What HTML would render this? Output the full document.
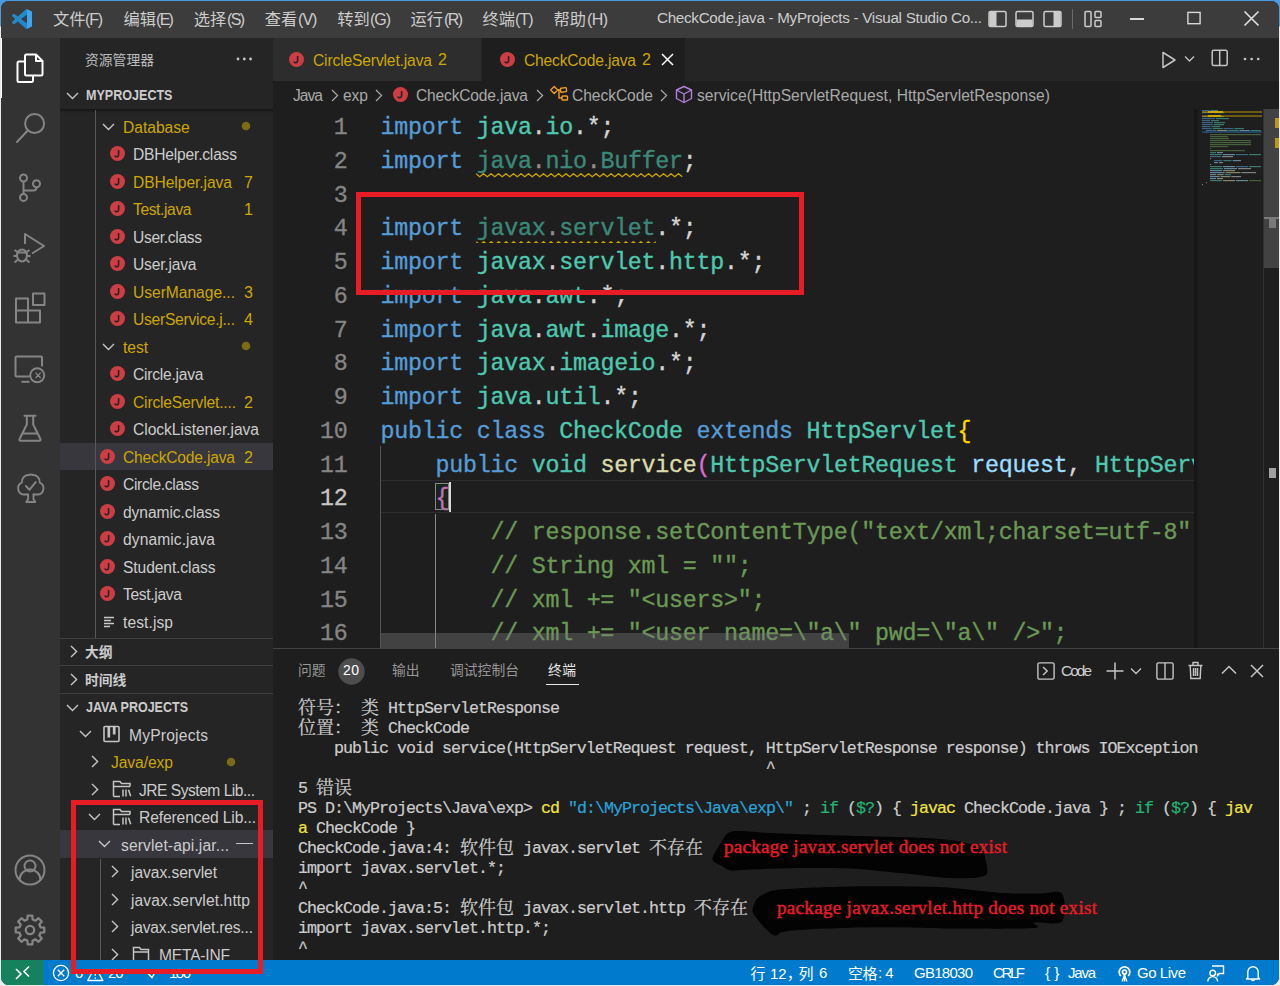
<!DOCTYPE html>
<html><head><meta charset="utf-8"><title>VS Code</title>
<style>
html,body{margin:0;padding:0;width:1280px;height:986px;overflow:hidden;background:#e9e4e4;}
body{background:linear-gradient(#4a9be0 0,#4a9be0 26px,#efeaea 27px,#efeaea 100%);font-family:"Liberation Sans",sans-serif;}
#win{position:absolute;left:1px;top:1px;width:1278px;height:984px;border-radius:8px;overflow:hidden;background:#1e1e1e;}
#win>*{margin-left:-1px;margin-top:-1px}
.b{position:absolute;display:block}
.t{position:absolute;white-space:pre;}
.clip{position:absolute;overflow:hidden}
.clip>*{position:absolute}
.tx{overflow:visible}
.ln{position:absolute;-webkit-text-stroke:0.3px currentColor;left:0;width:74.5px;text-align:right;font-family:"Liberation Mono",monospace;font-size:23.3295px;line-height:33.75px;height:33.75px;letter-spacing:-0.255px}
.cl{position:absolute;left:107.6px;-webkit-text-stroke:0.35px currentColor;font-family:"Liberation Mono",monospace;font-size:23.3295px;letter-spacing:-0.255px;line-height:33.75px;height:33.75px;white-space:pre}
.tm{font-family:"Liberation Mono",monospace;font-size:16.664px;letter-spacing:-1px;height:20px;line-height:20px;-webkit-text-stroke:0.2px currentColor}
.ts{font-family:"Liberation Serif","Noto Serif CJK SC",serif;font-size:18px;color:#cccccc;-webkit-text-stroke:0.2px currentColor}

</style></head>
<body>
<div id="win">
<div class="b" style="left:0px;top:0px;width:1280px;height:38px;background:#3c3c3c;"></div>
<svg class="b" style="left:12px;top:9px;" width="20" height="20" viewBox="0 0 100 100"><path d="M70.9 99.3a6.2 6.2 0 0 0 4.96-.19l20.6-9.9A6.25 6.25 0 0 0 100 83.6V16.4a6.25 6.25 0 0 0-3.54-5.63L75.87.86a6.23 6.23 0 0 0-7.1 1.2L29.35 38.04 12.19 25.01a4.16 4.16 0 0 0-5.32.24l-5.5 5.01a4.17 4.17 0 0 0 0 6.16L16.24 50 1.36 63.58a4.17 4.17 0 0 0 0 6.16l5.51 5.01a4.16 4.16 0 0 0 5.32.24l17.17-13.03L68.77 97.9a6.2 6.2 0 0 0 2.14 1.4zM75.02 27.3 45.11 50l29.9 22.7V27.3z" fill="#2489ca" fill-rule="evenodd"/><path d="M75.02 27.3v45.4l.0 26.5 21.4-10.3A6.25 6.25 0 0 0 100 83.6V16.4a6.25 6.25 0 0 0-3.54-5.63L75.87.86 75.02 27.3z" fill="#3fa9f5" opacity=".9"/></svg>
<div class="t" style="left:53.05px;top:7.60px;height:23px;line-height:23px;font-family:'Liberation Sans','Noto Sans CJK SC', sans-serif;font-size:16.25px;font-weight:400;color:#cccccc;">文件</div>
<svg class="b tx" style="left:85.45px;top:9.14px;" width="22.2" height="22.4"><text x="0" y="16" font-family="'Liberation Sans', sans-serif" font-size="16" font-weight="400" fill="#cccccc" textLength="18.15" lengthAdjust="spacing" xml:space="preserve">(F)</text></svg>
<div class="t" style="left:123.55px;top:7.60px;height:23px;line-height:23px;font-family:'Liberation Sans','Noto Sans CJK SC', sans-serif;font-size:16.25px;font-weight:400;color:#cccccc;">编辑</div>
<svg class="b tx" style="left:156.2px;top:9.14px;" width="21.9" height="22.4"><text x="0" y="16" font-family="'Liberation Sans', sans-serif" font-size="16" font-weight="400" fill="#cccccc" textLength="17.95" lengthAdjust="spacing" xml:space="preserve">(E)</text></svg>
<div class="t" style="left:193.8px;top:7.60px;height:23px;line-height:23px;font-family:'Liberation Sans','Noto Sans CJK SC', sans-serif;font-size:16.25px;font-weight:400;color:#cccccc;">选择</div>
<svg class="b tx" style="left:226.7px;top:9.14px;" width="22.2" height="22.4"><text x="0" y="16" font-family="'Liberation Sans', sans-serif" font-size="16" font-weight="400" fill="#cccccc" textLength="18.20" lengthAdjust="spacing" xml:space="preserve">(S)</text></svg>
<div class="t" style="left:264.8px;top:7.60px;height:23px;line-height:23px;font-family:'Liberation Sans','Noto Sans CJK SC', sans-serif;font-size:16.25px;font-weight:400;color:#cccccc;">查看</div>
<svg class="b tx" style="left:297.95px;top:9.14px;" width="23.4" height="22.4"><text x="0" y="16" font-family="'Liberation Sans', sans-serif" font-size="16" font-weight="400" fill="#cccccc" textLength="19.45" lengthAdjust="spacing" xml:space="preserve">(V)</text></svg>
<div class="t" style="left:337.3px;top:7.60px;height:23px;line-height:23px;font-family:'Liberation Sans','Noto Sans CJK SC', sans-serif;font-size:16.25px;font-weight:400;color:#cccccc;">转到</div>
<svg class="b tx" style="left:370.45px;top:9.14px;" width="25.2" height="22.4"><text x="0" y="16" font-family="'Liberation Sans', sans-serif" font-size="16" font-weight="400" fill="#cccccc" textLength="21.20" lengthAdjust="spacing" xml:space="preserve">(G)</text></svg>
<div class="t" style="left:410.55px;top:7.60px;height:23px;line-height:23px;font-family:'Liberation Sans','Noto Sans CJK SC', sans-serif;font-size:16.25px;font-weight:400;color:#cccccc;">运行</div>
<svg class="b tx" style="left:443.7px;top:9.14px;" width="23.2" height="22.4"><text x="0" y="16" font-family="'Liberation Sans', sans-serif" font-size="16" font-weight="400" fill="#cccccc" textLength="19.20" lengthAdjust="spacing" xml:space="preserve">(R)</text></svg>
<div class="t" style="left:482.55px;top:7.60px;height:23px;line-height:23px;font-family:'Liberation Sans','Noto Sans CJK SC', sans-serif;font-size:16.25px;font-weight:400;color:#cccccc;">终端</div>
<svg class="b tx" style="left:515.45px;top:9.14px;" width="22.7" height="22.4"><text x="0" y="16" font-family="'Liberation Sans', sans-serif" font-size="16" font-weight="400" fill="#cccccc" textLength="18.70" lengthAdjust="spacing" xml:space="preserve">(T)</text></svg>
<div class="t" style="left:553.55px;top:7.60px;height:23px;line-height:23px;font-family:'Liberation Sans','Noto Sans CJK SC', sans-serif;font-size:16.25px;font-weight:400;color:#cccccc;">帮助</div>
<svg class="b tx" style="left:586.7px;top:9.14px;" width="25.2" height="22.4"><text x="0" y="16" font-family="'Liberation Sans', sans-serif" font-size="16" font-weight="400" fill="#cccccc" textLength="21.20" lengthAdjust="spacing" xml:space="preserve">(H)</text></svg>
<svg class="b tx" style="left:657px;top:7.77px;" width="329.0" height="21.3"><text x="0" y="15.2" font-family="'Liberation Sans', sans-serif" font-size="15.2" font-weight="400" fill="#cccccc" textLength="325.00" lengthAdjust="spacing" xml:space="preserve">CheckCode.java - MyProjects - Visual Studio Co...</text></svg>
<svg class="b" style="left:988px;top:10px;" width="19" height="18" viewBox="0 0 19 18"><rect x="1" y="1.5" width="17" height="15" rx="1.5" fill="none" stroke="#cccccc" stroke-width="1.5"/><rect x="1.5" y="2" width="7" height="14" fill="#cccccc"/></svg>
<svg class="b" style="left:1015px;top:10px;" width="19" height="18" viewBox="0 0 19 18"><rect x="1" y="1.5" width="17" height="15" rx="1.5" fill="none" stroke="#cccccc" stroke-width="1.5"/><rect x="1.5" y="9.5" width="16" height="6.5" fill="#cccccc"/></svg>
<svg class="b" style="left:1043px;top:10px;" width="19" height="18" viewBox="0 0 19 18"><rect x="1" y="1.5" width="17" height="15" rx="1.5" fill="none" stroke="#cccccc" stroke-width="1.5"/><rect x="10.5" y="2" width="7" height="14" fill="#cccccc"/></svg>
<div class="b" style="left:1072px;top:9px;width:1px;height:20px;background:#6b6b6b;"></div>
<svg class="b" style="left:1084px;top:10px;" width="18" height="18" viewBox="0 0 18 18"><g fill="none" stroke="#cccccc" stroke-width="1.5"><rect x="1" y="1.5" width="6" height="15" rx="1"/><rect x="11" y="1.5" width="6" height="6" rx="1"/><rect x="11" y="10.5" width="6" height="6" rx="1"/></g></svg>
<div class="b" style="left:1130px;top:18px;width:14px;height:1.5px;background:#d8d8d8;"></div>
<svg class="b" style="left:1186px;top:11px;" width="16" height="15" viewBox="0 0 16 15"><rect x="1.9" y="1.4" width="12.2" height="11.3" fill="none" stroke="#d8d8d8" stroke-width="1.4"/></svg>
<svg class="b" style="left:1243px;top:10px;" width="17" height="17" viewBox="0 0 17 17"><path d="M1.5 1.5 L15.5 15.5 M15.5 1.5 L1.5 15.5" stroke="#e0e0e0" stroke-width="1.6" fill="none"/></svg>
<div class="b" style="left:0px;top:38px;width:60px;height:922px;background:#333333;"></div>
<div class="b" style="left:1px;top:38px;width:1.4px;height:60px;background:#ffffff;"></div>
<svg class="b" style="left:15px;top:52px;" width="30" height="32" viewBox="0 0 30 32"><g fill="none" stroke="#fff" stroke-width="2" stroke-linejoin="round"><path d="M11.5 2.5 h9.5 l6.5 6.5 v13 a1.5 1.5 0 0 1 -1.5 1.5 h-14.5 a1.5 1.5 0 0 1 -1.5 -1.5 v-18 a1.5 1.5 0 0 1 1.5 -1.5z"/><path d="M21 2.5 v6.5 h6.5"/><path d="M10 9.5 h-6 a1.5 1.5 0 0 0 -1.5 1.5 v17.5 a1.5 1.5 0 0 0 1.5 1.5 h12.5 a1.5 1.5 0 0 0 1.5 -1.5 v-5"/></g></svg>
<svg class="b" style="left:14px;top:111px;" width="34" height="34" viewBox="0 0 34 34"><g fill="none" stroke="#858585" stroke-width="2" stroke-linecap="round"><circle cx="20.6" cy="12.5" r="9.5"/><path d="M13.7 19.5 L3 31"/></g></svg>
<svg class="b" style="left:14px;top:170px;" width="34" height="36" viewBox="0 0 34 36"><g fill="none" stroke="#858585" stroke-width="2"><circle cx="9.5" cy="8" r="3.5"/><circle cx="22.5" cy="13.7" r="3.5"/><circle cx="9.5" cy="27.4" r="3.5"/><path d="M9.5 11.5 V24 M22.5 17.2 V17.6 a3 3 0 0 1 -3 3 H9.5"/></g></svg>
<svg class="b" style="left:12px;top:230px;" width="36" height="36" viewBox="0 0 36 36"><g fill="none" stroke="#858585" stroke-width="2" stroke-linejoin="round"><path d="M13 14 V4 L32 16 L20 23.5"/><ellipse cx="10" cy="25.5" rx="5" ry="6"/><path d="M5.5 22 L2.5 20 M14.5 22 L17.5 20 M5 26 H1.5 M15 26 H18.5 M5.5 30 L2.5 32.5 M14.5 30 L17.5 32.5 M6 22.5 H14"/></g></svg>
<svg class="b" style="left:14px;top:290px;" width="34" height="34" viewBox="0 0 34 34"><g fill="none" stroke="#858585" stroke-width="2" stroke-linejoin="round"><path d="M2 8.5 H14 V20.5 H2 Z M14 20.5 H26 V32.5 H14 Z M2 20.5 V32.5 H14"/><rect x="19" y="3.5" width="11.5" height="11.5"/></g></svg>
<svg class="b" style="left:13px;top:353.4px;" width="36" height="34" viewBox="0 0 36 34"><g fill="none" stroke="#858585" stroke-width="2" stroke-linejoin="round"><path d="M16.5 23.5 H3.5 a1 1 0 0 1 -1 -1 V4.5 a1 1 0 0 1 1 -1 H28 a1 1 0 0 1 1 1 V13.5"/><path d="M8.5 28.8 H16.5"/><circle cx="24.2" cy="22.3" r="7"/><path d="M22.6 19.6 l2.3 2.7 l-2.3 2.7 M27.6 19.6 l-2.3 2.7 l2.3 2.7" stroke-width="1.3"/></g></svg>
<svg class="b" style="left:14px;top:411px;" width="34" height="34" viewBox="0 0 34 34"><g fill="none" stroke="#858585" stroke-width="2" stroke-linejoin="round" stroke-linecap="round"><path d="M10.5 4.8 H21.5 M12.8 4.8 V13.5 L5.6 28 a1.2 1.2 0 0 0 1 1.8 H25.4 a1.2 1.2 0 0 0 1 -1.8 L19.2 13.5 V4.8"/><path d="M9 22.4 H23"/></g></svg>
<svg class="b" style="left:13px;top:467.8px;" width="36" height="36" viewBox="0 0 36 36"><g transform="translate(1.6,1.8) scale(.9,.95)" fill="none" stroke="#858585" stroke-width="2.1" stroke-linejoin="round" stroke-linecap="round"><path d="M15 26 H10 a6.5 6.5 0 0 1 -2 -12.5 a7.5 7.5 0 0 1 7 -8 a8 8 0 0 1 6 0 a7.5 7.5 0 0 1 7 8 a6.5 6.5 0 0 1 -2 12.5 H21"/><path d="M15 26 V31 L13 34 H23 L21 31 V26"/><path d="M12.5 17 l4 4 l7 -8"/></g></svg>
<svg class="b" style="left:13.2px;top:852.8px;" width="34" height="34" viewBox="0 0 34 34"><g fill="none" stroke="#858585" stroke-width="2"><circle cx="17" cy="17" r="14.5"/><circle cx="17" cy="13" r="5.5"/><path d="M6.5 27 a10.5 10.5 0 0 1 21 0"/></g></svg>
<svg class="b" style="left:13px;top:912.8px;" width="34" height="34" viewBox="0 0 34 34"><g fill="none" stroke="#858585" stroke-width="2.3" stroke-linejoin="round"><path d="M31.3 14.7 L31.3 19.3 L27.5 19.7 L26.3 22.5 L28.8 25.5 L25.5 28.8 L22.5 26.3 L19.7 27.5 L19.3 31.3 L14.7 31.3 L14.3 27.5 L11.5 26.3 L8.5 28.8 L5.2 25.5 L7.7 22.5 L6.5 19.7 L2.7 19.3 L2.7 14.7 L6.5 14.3 L7.7 11.5 L5.2 8.5 L8.5 5.2 L11.5 7.7 L14.3 6.5 L14.7 2.7 L19.3 2.7 L19.7 6.5 L22.5 7.7 L25.5 5.2 L28.8 8.5 L26.3 11.5 L27.5 14.3Z"/><circle cx="17" cy="17" r="4.2"/></g></svg>
<div class="b" style="left:60px;top:38px;width:213px;height:922px;background:#252526;"></div>
<div class="t" style="left:85px;top:50.50px;height:19px;line-height:19px;font-family:'Liberation Sans','Noto Sans CJK SC', sans-serif;font-size:13.8px;font-weight:400;color:#bbbbbb;">资源管理器</div>
<svg class="b" style="left:236px;top:57px;" width="17" height="4" viewBox="0 0 17 4"><circle cx="2" cy="2" r="1.4" fill="#c5c5c5"/><circle cx="8.3" cy="2" r="1.4" fill="#c5c5c5"/><circle cx="14.6" cy="2" r="1.4" fill="#c5c5c5"/></svg>
<svg class="b" style="left:66.0px;top:89.0px;" width="13" height="13" viewBox="0 0 13 13"><path d="M1 4 L6.5 9.6 L12 4" fill="none" stroke="#c5c5c5" stroke-width="1.4"/></svg>
<svg class="b tx" style="left:85.5px;top:85.89px;" width="90.5" height="20.2"><text x="0" y="14.4" font-family="'Liberation Sans', sans-serif" font-size="14.4" font-weight="700" fill="#cccccc" textLength="86.50" lengthAdjust="spacingAndGlyphs" xml:space="preserve">MYPROJECTS</text></svg>
<div class="b" style="left:60px;top:108.6px;width:213px;height:4px;background:linear-gradient(rgba(0,0,0,.45),rgba(0,0,0,0));"></div>
<div class="b" style="left:60px;top:443px;width:213px;height:27.3px;background:#37373d;"></div>
<div class="b" style="left:95px;top:109.5px;width:1px;height:529px;background:#585858;"></div>
<svg class="b" style="left:102.0px;top:119.9px;" width="13" height="13" viewBox="0 0 13 13"><path d="M1 4 L6.5 9.6 L12 4" fill="none" stroke="#c5c5c5" stroke-width="1.4"/></svg>
<svg class="b tx" style="left:123px;top:116.91px;" width="70.8" height="21.8"><text x="0" y="15.6" font-family="'Liberation Sans', sans-serif" font-size="15.6" font-weight="400" fill="#cca700" textLength="66.77" lengthAdjust="spacing" xml:space="preserve">Database</text></svg>
<svg class="b" style="left:241px;top:121.3px;" width="10" height="10" viewBox="0 0 10 10"><circle cx="5" cy="5" r="4.3" fill="#7d6a17"/></svg>
<svg class="b" style="left:110.0px;top:146.2px;" width="15" height="15" viewBox="0 0 15 15"><circle cx="7.5" cy="7.5" r="7.5" fill="#cc3e44"/><path d="M8.6 4.1 V8.9 a1.9 1.9 0 0 1 -3.7 .5" fill="none" stroke="#2a2223" stroke-width="1.6"/></svg>
<svg class="b tx" style="left:133px;top:144.41px;" width="108.0" height="21.8"><text x="0" y="15.6" font-family="'Liberation Sans', sans-serif" font-size="15.6" font-weight="400" fill="#cccccc" textLength="104.00" lengthAdjust="spacing" xml:space="preserve">DBHelper.class</text></svg>
<svg class="b" style="left:110.0px;top:173.7px;" width="15" height="15" viewBox="0 0 15 15"><circle cx="7.5" cy="7.5" r="7.5" fill="#cc3e44"/><path d="M8.6 4.1 V8.9 a1.9 1.9 0 0 1 -3.7 .5" fill="none" stroke="#2a2223" stroke-width="1.6"/></svg>
<svg class="b tx" style="left:133px;top:171.91px;" width="103.0" height="21.8"><text x="0" y="15.6" font-family="'Liberation Sans', sans-serif" font-size="15.6" font-weight="400" fill="#cca700" textLength="99.00" lengthAdjust="spacing" xml:space="preserve">DBHelper.java</text></svg>
<svg class="b tx" style="left:244.3px;top:171.64px;" width="12.9" height="22.4"><text x="0" y="16" font-family="'Liberation Sans', sans-serif" font-size="16" font-weight="400" fill="#cca700" xml:space="preserve">7</text></svg>
<svg class="b" style="left:110.0px;top:201.2px;" width="15" height="15" viewBox="0 0 15 15"><circle cx="7.5" cy="7.5" r="7.5" fill="#cc3e44"/><path d="M8.6 4.1 V8.9 a1.9 1.9 0 0 1 -3.7 .5" fill="none" stroke="#2a2223" stroke-width="1.6"/></svg>
<svg class="b tx" style="left:133px;top:199.41px;" width="62.5" height="21.8"><text x="0" y="15.6" font-family="'Liberation Sans', sans-serif" font-size="15.6" font-weight="400" fill="#cca700" textLength="58.50" lengthAdjust="spacing" xml:space="preserve">Test.java</text></svg>
<svg class="b tx" style="left:244.3px;top:199.14px;" width="12.9" height="22.4"><text x="0" y="16" font-family="'Liberation Sans', sans-serif" font-size="16" font-weight="400" fill="#cca700" xml:space="preserve">1</text></svg>
<svg class="b" style="left:110.0px;top:228.7px;" width="15" height="15" viewBox="0 0 15 15"><circle cx="7.5" cy="7.5" r="7.5" fill="#cc3e44"/><path d="M8.6 4.1 V8.9 a1.9 1.9 0 0 1 -3.7 .5" fill="none" stroke="#2a2223" stroke-width="1.6"/></svg>
<svg class="b tx" style="left:133px;top:226.91px;" width="73.0" height="21.8"><text x="0" y="15.6" font-family="'Liberation Sans', sans-serif" font-size="15.6" font-weight="400" fill="#cccccc" textLength="69.00" lengthAdjust="spacing" xml:space="preserve">User.class</text></svg>
<svg class="b" style="left:110.0px;top:256.2px;" width="15" height="15" viewBox="0 0 15 15"><circle cx="7.5" cy="7.5" r="7.5" fill="#cc3e44"/><path d="M8.6 4.1 V8.9 a1.9 1.9 0 0 1 -3.7 .5" fill="none" stroke="#2a2223" stroke-width="1.6"/></svg>
<svg class="b tx" style="left:133px;top:254.41px;" width="67.5" height="21.8"><text x="0" y="15.6" font-family="'Liberation Sans', sans-serif" font-size="15.6" font-weight="400" fill="#cccccc" textLength="63.50" lengthAdjust="spacing" xml:space="preserve">User.java</text></svg>
<svg class="b" style="left:110.0px;top:283.7px;" width="15" height="15" viewBox="0 0 15 15"><circle cx="7.5" cy="7.5" r="7.5" fill="#cc3e44"/><path d="M8.6 4.1 V8.9 a1.9 1.9 0 0 1 -3.7 .5" fill="none" stroke="#2a2223" stroke-width="1.6"/></svg>
<svg class="b tx" style="left:133px;top:281.91px;" width="106.0" height="21.8"><text x="0" y="15.6" font-family="'Liberation Sans', sans-serif" font-size="15.6" font-weight="400" fill="#cca700" textLength="102.00" lengthAdjust="spacing" xml:space="preserve">UserManage...</text></svg>
<svg class="b tx" style="left:244.3px;top:281.64px;" width="12.9" height="22.4"><text x="0" y="16" font-family="'Liberation Sans', sans-serif" font-size="16" font-weight="400" fill="#cca700" xml:space="preserve">3</text></svg>
<svg class="b" style="left:110.0px;top:311.2px;" width="15" height="15" viewBox="0 0 15 15"><circle cx="7.5" cy="7.5" r="7.5" fill="#cc3e44"/><path d="M8.6 4.1 V8.9 a1.9 1.9 0 0 1 -3.7 .5" fill="none" stroke="#2a2223" stroke-width="1.6"/></svg>
<svg class="b tx" style="left:133px;top:309.41px;" width="106.0" height="21.8"><text x="0" y="15.6" font-family="'Liberation Sans', sans-serif" font-size="15.6" font-weight="400" fill="#cca700" textLength="102.00" lengthAdjust="spacing" xml:space="preserve">UserService.j...</text></svg>
<svg class="b tx" style="left:244.3px;top:309.14px;" width="12.9" height="22.4"><text x="0" y="16" font-family="'Liberation Sans', sans-serif" font-size="16" font-weight="400" fill="#cca700" xml:space="preserve">4</text></svg>
<svg class="b" style="left:102.0px;top:339.9px;" width="13" height="13" viewBox="0 0 13 13"><path d="M1 4 L6.5 9.6 L12 4" fill="none" stroke="#c5c5c5" stroke-width="1.4"/></svg>
<svg class="b tx" style="left:123px;top:336.91px;" width="29.1" height="21.8"><text x="0" y="15.6" font-family="'Liberation Sans', sans-serif" font-size="15.6" font-weight="400" fill="#cca700" textLength="25.14" lengthAdjust="spacing" xml:space="preserve">test</text></svg>
<svg class="b" style="left:241px;top:341.3px;" width="10" height="10" viewBox="0 0 10 10"><circle cx="5" cy="5" r="4.3" fill="#7d6a17"/></svg>
<svg class="b" style="left:110.0px;top:366.2px;" width="15" height="15" viewBox="0 0 15 15"><circle cx="7.5" cy="7.5" r="7.5" fill="#cc3e44"/><path d="M8.6 4.1 V8.9 a1.9 1.9 0 0 1 -3.7 .5" fill="none" stroke="#2a2223" stroke-width="1.6"/></svg>
<svg class="b tx" style="left:133px;top:364.41px;" width="74.5" height="21.8"><text x="0" y="15.6" font-family="'Liberation Sans', sans-serif" font-size="15.6" font-weight="400" fill="#cccccc" textLength="70.50" lengthAdjust="spacing" xml:space="preserve">Circle.java</text></svg>
<svg class="b" style="left:110.0px;top:393.7px;" width="15" height="15" viewBox="0 0 15 15"><circle cx="7.5" cy="7.5" r="7.5" fill="#cc3e44"/><path d="M8.6 4.1 V8.9 a1.9 1.9 0 0 1 -3.7 .5" fill="none" stroke="#2a2223" stroke-width="1.6"/></svg>
<svg class="b tx" style="left:133px;top:391.91px;" width="107.0" height="21.8"><text x="0" y="15.6" font-family="'Liberation Sans', sans-serif" font-size="15.6" font-weight="400" fill="#cca700" textLength="103.00" lengthAdjust="spacing" xml:space="preserve">CircleServlet....</text></svg>
<svg class="b tx" style="left:244.3px;top:391.64px;" width="12.9" height="22.4"><text x="0" y="16" font-family="'Liberation Sans', sans-serif" font-size="16" font-weight="400" fill="#cca700" xml:space="preserve">2</text></svg>
<svg class="b" style="left:110.0px;top:421.2px;" width="15" height="15" viewBox="0 0 15 15"><circle cx="7.5" cy="7.5" r="7.5" fill="#cc3e44"/><path d="M8.6 4.1 V8.9 a1.9 1.9 0 0 1 -3.7 .5" fill="none" stroke="#2a2223" stroke-width="1.6"/></svg>
<svg class="b tx" style="left:133px;top:419.41px;" width="130.0" height="21.8"><text x="0" y="15.6" font-family="'Liberation Sans', sans-serif" font-size="15.6" font-weight="400" fill="#cccccc" textLength="126.00" lengthAdjust="spacing" xml:space="preserve">ClockListener.java</text></svg>
<svg class="b" style="left:100.0px;top:448.7px;" width="15" height="15" viewBox="0 0 15 15"><circle cx="7.5" cy="7.5" r="7.5" fill="#cc3e44"/><path d="M8.6 4.1 V8.9 a1.9 1.9 0 0 1 -3.7 .5" fill="none" stroke="#2a2223" stroke-width="1.6"/></svg>
<svg class="b tx" style="left:123px;top:446.91px;" width="116.0" height="21.8"><text x="0" y="15.6" font-family="'Liberation Sans', sans-serif" font-size="15.6" font-weight="400" fill="#cca700" textLength="112.00" lengthAdjust="spacing" xml:space="preserve">CheckCode.java</text></svg>
<svg class="b tx" style="left:244.3px;top:446.64px;" width="12.9" height="22.4"><text x="0" y="16" font-family="'Liberation Sans', sans-serif" font-size="16" font-weight="400" fill="#cca700" xml:space="preserve">2</text></svg>
<svg class="b" style="left:100.0px;top:476.2px;" width="15" height="15" viewBox="0 0 15 15"><circle cx="7.5" cy="7.5" r="7.5" fill="#cc3e44"/><path d="M8.6 4.1 V8.9 a1.9 1.9 0 0 1 -3.7 .5" fill="none" stroke="#2a2223" stroke-width="1.6"/></svg>
<svg class="b tx" style="left:123px;top:474.41px;" width="80.0" height="21.8"><text x="0" y="15.6" font-family="'Liberation Sans', sans-serif" font-size="15.6" font-weight="400" fill="#cccccc" textLength="76.00" lengthAdjust="spacing" xml:space="preserve">Circle.class</text></svg>
<svg class="b" style="left:100.0px;top:503.7px;" width="15" height="15" viewBox="0 0 15 15"><circle cx="7.5" cy="7.5" r="7.5" fill="#cc3e44"/><path d="M8.6 4.1 V8.9 a1.9 1.9 0 0 1 -3.7 .5" fill="none" stroke="#2a2223" stroke-width="1.6"/></svg>
<svg class="b tx" style="left:123px;top:501.91px;" width="101.0" height="21.8"><text x="0" y="15.6" font-family="'Liberation Sans', sans-serif" font-size="15.6" font-weight="400" fill="#cccccc" textLength="97.00" lengthAdjust="spacing" xml:space="preserve">dynamic.class</text></svg>
<svg class="b" style="left:100.0px;top:531.2px;" width="15" height="15" viewBox="0 0 15 15"><circle cx="7.5" cy="7.5" r="7.5" fill="#cc3e44"/><path d="M8.6 4.1 V8.9 a1.9 1.9 0 0 1 -3.7 .5" fill="none" stroke="#2a2223" stroke-width="1.6"/></svg>
<svg class="b tx" style="left:123px;top:529.41px;" width="96.0" height="21.8"><text x="0" y="15.6" font-family="'Liberation Sans', sans-serif" font-size="15.6" font-weight="400" fill="#cccccc" textLength="92.00" lengthAdjust="spacing" xml:space="preserve">dynamic.java</text></svg>
<svg class="b" style="left:100.0px;top:558.7px;" width="15" height="15" viewBox="0 0 15 15"><circle cx="7.5" cy="7.5" r="7.5" fill="#cc3e44"/><path d="M8.6 4.1 V8.9 a1.9 1.9 0 0 1 -3.7 .5" fill="none" stroke="#2a2223" stroke-width="1.6"/></svg>
<svg class="b tx" style="left:123px;top:556.91px;" width="96.5" height="21.8"><text x="0" y="15.6" font-family="'Liberation Sans', sans-serif" font-size="15.6" font-weight="400" fill="#cccccc" textLength="92.50" lengthAdjust="spacing" xml:space="preserve">Student.class</text></svg>
<svg class="b" style="left:100.0px;top:586.2px;" width="15" height="15" viewBox="0 0 15 15"><circle cx="7.5" cy="7.5" r="7.5" fill="#cc3e44"/><path d="M8.6 4.1 V8.9 a1.9 1.9 0 0 1 -3.7 .5" fill="none" stroke="#2a2223" stroke-width="1.6"/></svg>
<svg class="b tx" style="left:123px;top:584.41px;" width="63.0" height="21.8"><text x="0" y="15.6" font-family="'Liberation Sans', sans-serif" font-size="15.6" font-weight="400" fill="#cccccc" textLength="59.00" lengthAdjust="spacing" xml:space="preserve">Test.java</text></svg>
<svg class="b" style="left:104px;top:616.0px;" width="11" height="12" viewBox="0 0 11 12"><path d="M0 1.5 H10 M0 4.5 H7 M0 7.5 H10 M0 10.5 H6" stroke="#cccccc" stroke-width="1.3" fill="none"/></svg>
<svg class="b tx" style="left:123px;top:611.91px;" width="54.0" height="21.8"><text x="0" y="15.6" font-family="'Liberation Sans', sans-serif" font-size="15.6" font-weight="400" fill="#cccccc" textLength="50.00" lengthAdjust="spacing" xml:space="preserve">test.jsp</text></svg>
<div class="b" style="left:60px;top:638px;width:213px;height:1px;background:#3f3f40;"></div>
<div class="b" style="left:60px;top:665px;width:213px;height:1px;background:#3f3f40;"></div>
<div class="b" style="left:60px;top:693px;width:213px;height:1px;background:#3f3f40;"></div>
<svg class="b" style="left:66.5px;top:645.0px;" width="13" height="13" viewBox="0 0 13 13"><path d="M4 1 L9.6 6.5 L4 12" fill="none" stroke="#c5c5c5" stroke-width="1.4"/></svg>
<div class="t" style="left:85px;top:642.90px;height:19px;line-height:19px;font-family:'Liberation Sans','Noto Sans CJK SC', sans-serif;font-size:13.8px;font-weight:700;color:#cccccc;">大纲</div>
<svg class="b" style="left:66.5px;top:672.5px;" width="13" height="13" viewBox="0 0 13 13"><path d="M4 1 L9.6 6.5 L4 12" fill="none" stroke="#c5c5c5" stroke-width="1.4"/></svg>
<div class="t" style="left:85px;top:670.50px;height:19px;line-height:19px;font-family:'Liberation Sans','Noto Sans CJK SC', sans-serif;font-size:13.8px;font-weight:700;color:#cccccc;">时间线</div>
<svg class="b" style="left:66.0px;top:700.5px;" width="13" height="13" viewBox="0 0 13 13"><path d="M1 4 L6.5 9.6 L12 4" fill="none" stroke="#c5c5c5" stroke-width="1.4"/></svg>
<svg class="b tx" style="left:85.5px;top:697.59px;" width="106.0" height="20.2"><text x="0" y="14.4" font-family="'Liberation Sans', sans-serif" font-size="14.4" font-weight="700" fill="#cccccc" textLength="102.00" lengthAdjust="spacingAndGlyphs" xml:space="preserve">JAVA PROJECTS</text></svg>
<div class="b" style="left:60px;top:830.2px;width:213px;height:27.5px;background:#37373d;"></div>
<div class="b" style="left:100px;top:858.5px;width:1px;height:102px;background:#585858;"></div>
<svg class="b" style="left:78.5px;top:727.4px;" width="13" height="13" viewBox="0 0 13 13"><path d="M1 4 L6.5 9.6 L12 4" fill="none" stroke="#c5c5c5" stroke-width="1.4"/></svg>
<svg class="b" style="left:103px;top:725.0px;" width="17" height="18" viewBox="0 0 17 18"><g fill="none" stroke="#c5c5c5" stroke-width="1.6"><rect x="1" y="1.5" width="15" height="15" rx="1"/><path d="M5.8 2 V12.5 M11.2 2 V9.5" stroke-width="2.7"/></g></svg>
<svg class="b tx" style="left:129px;top:724.61px;" width="83.0" height="21.8"><text x="0" y="15.6" font-family="'Liberation Sans', sans-serif" font-size="15.6" font-weight="400" fill="#cccccc" textLength="79.00" lengthAdjust="spacing" xml:space="preserve">MyProjects</text></svg>
<svg class="b" style="left:87.5px;top:755.0px;" width="13" height="13" viewBox="0 0 13 13"><path d="M4 1 L9.6 6.5 L4 12" fill="none" stroke="#c5c5c5" stroke-width="1.4"/></svg>
<svg class="b tx" style="left:111px;top:752.11px;" width="66.0" height="21.8"><text x="0" y="15.6" font-family="'Liberation Sans', sans-serif" font-size="15.6" font-weight="400" fill="#cca700" textLength="62.00" lengthAdjust="spacing" xml:space="preserve">Java/exp</text></svg>
<svg class="b" style="left:226px;top:756.5px;" width="10" height="10" viewBox="0 0 10 10"><circle cx="5" cy="5" r="4.3" fill="#7d6a17"/></svg>
<svg class="b" style="left:87.5px;top:782.5px;" width="13" height="13" viewBox="0 0 13 13"><path d="M4 1 L9.6 6.5 L4 12" fill="none" stroke="#c5c5c5" stroke-width="1.4"/></svg>
<svg class="b" style="left:112px;top:780.0px;" width="20" height="18" viewBox="0 0 20 18"><g fill="none" stroke="#c5c5c5" stroke-width="1.5"><path d="M1.5 16.5 V1.5 H8 L9.5 3.5 H18 V6.5 M1.5 6.5 H18 M1.5 16.5 H8"/><path d="M11 9.5 V16.5 M14 9.5 V16.5 M16.5 9.8 L18.7 16.3"/></g></svg>
<svg class="b tx" style="left:139px;top:779.61px;" width="120.0" height="21.8"><text x="0" y="15.6" font-family="'Liberation Sans', sans-serif" font-size="15.6" font-weight="400" fill="#cccccc" textLength="116.00" lengthAdjust="spacing" xml:space="preserve">JRE System Lib...</text></svg>
<svg class="b" style="left:87.5px;top:809.9px;" width="13" height="13" viewBox="0 0 13 13"><path d="M1 4 L6.5 9.6 L12 4" fill="none" stroke="#c5c5c5" stroke-width="1.4"/></svg>
<svg class="b" style="left:112px;top:807.5px;" width="20" height="18" viewBox="0 0 20 18"><g fill="none" stroke="#c5c5c5" stroke-width="1.5"><path d="M1.5 16.5 V1.5 H8 L9.5 3.5 H18 V6.5 M1.5 6.5 H18 M1.5 16.5 H8"/><path d="M11 9.5 V16.5 M14 9.5 V16.5 M16.5 9.8 L18.7 16.3"/></g></svg>
<svg class="b tx" style="left:139px;top:807.11px;" width="121.0" height="21.8"><text x="0" y="15.6" font-family="'Liberation Sans', sans-serif" font-size="15.6" font-weight="400" fill="#cccccc" textLength="117.00" lengthAdjust="spacing" xml:space="preserve">Referenced Lib...</text></svg>
<svg class="b" style="left:97.5px;top:837.4px;" width="13" height="13" viewBox="0 0 13 13"><path d="M1 4 L6.5 9.6 L12 4" fill="none" stroke="#c5c5c5" stroke-width="1.4"/></svg>
<svg class="b tx" style="left:121px;top:834.61px;" width="112.0" height="21.8"><text x="0" y="15.6" font-family="'Liberation Sans', sans-serif" font-size="15.6" font-weight="400" fill="#cccccc" textLength="108.00" lengthAdjust="spacing" xml:space="preserve">servlet-api.jar...</text></svg>
<div class="b" style="left:236px;top:843.2px;width:17px;height:1.2px;background:#c5c5c5;"></div>
<svg class="b" style="left:107.5px;top:865.0px;" width="13" height="13" viewBox="0 0 13 13"><path d="M4 1 L9.6 6.5 L4 12" fill="none" stroke="#c5c5c5" stroke-width="1.4"/></svg>
<svg class="b tx" style="left:131px;top:862.11px;" width="90.0" height="21.8"><text x="0" y="15.6" font-family="'Liberation Sans', sans-serif" font-size="15.6" font-weight="400" fill="#cccccc" textLength="86.00" lengthAdjust="spacing" xml:space="preserve">javax.servlet</text></svg>
<svg class="b" style="left:107.5px;top:892.5px;" width="13" height="13" viewBox="0 0 13 13"><path d="M4 1 L9.6 6.5 L4 12" fill="none" stroke="#c5c5c5" stroke-width="1.4"/></svg>
<svg class="b tx" style="left:131px;top:889.61px;" width="123.0" height="21.8"><text x="0" y="15.6" font-family="'Liberation Sans', sans-serif" font-size="15.6" font-weight="400" fill="#cccccc" textLength="119.00" lengthAdjust="spacing" xml:space="preserve">javax.servlet.http</text></svg>
<svg class="b" style="left:107.5px;top:920.0px;" width="13" height="13" viewBox="0 0 13 13"><path d="M4 1 L9.6 6.5 L4 12" fill="none" stroke="#c5c5c5" stroke-width="1.4"/></svg>
<svg class="b tx" style="left:131px;top:917.11px;" width="126.0" height="21.8"><text x="0" y="15.6" font-family="'Liberation Sans', sans-serif" font-size="15.6" font-weight="400" fill="#cccccc" textLength="122.00" lengthAdjust="spacing" xml:space="preserve">javax.servlet.res...</text></svg>
<svg class="b" style="left:107.5px;top:947.5px;" width="13" height="13" viewBox="0 0 13 13"><path d="M4 1 L9.6 6.5 L4 12" fill="none" stroke="#c5c5c5" stroke-width="1.4"/></svg>
<svg class="b" style="left:132px;top:946.0px;" width="18" height="17" viewBox="0 0 18 17"><g fill="none" stroke="#c5c5c5" stroke-width="1.5"><path d="M1.5 15.5 V1.5 H7.5 L9 3.5 H16.5 V15.5 M1.5 6 H16.5"/></g></svg>
<svg class="b tx" style="left:159px;top:944.61px;" width="75.0" height="21.8"><text x="0" y="15.6" font-family="'Liberation Sans', sans-serif" font-size="15.6" font-weight="400" fill="#cccccc" textLength="71.00" lengthAdjust="spacing" xml:space="preserve">META-INF</text></svg>
<div class="b" style="left:273px;top:38px;width:1007px;height:43px;background:#252526;"></div>
<div class="b" style="left:273px;top:38px;width:209px;height:43px;background:#2d2d2d;"></div>
<div class="b" style="left:482px;top:38px;width:203px;height:43px;background:#1e1e1e;"></div>
<div class="b" style="left:481px;top:38px;width:1px;height:43px;background:#252526;"></div>
<svg class="b" style="left:289.0px;top:51.7px;" width="15" height="15" viewBox="0 0 15 15"><circle cx="7.5" cy="7.5" r="7.5" fill="#cc3e44"/><path d="M8.6 4.1 V8.9 a1.9 1.9 0 0 1 -3.7 .5" fill="none" stroke="#2a2223" stroke-width="1.6"/></svg>
<svg class="b tx" style="left:313px;top:49.91px;" width="123.0" height="21.8"><text x="0" y="15.6" font-family="'Liberation Sans', sans-serif" font-size="15.6" font-weight="400" fill="#cca700" textLength="119.00" lengthAdjust="spacing" xml:space="preserve">CircleServlet.java</text></svg>
<svg class="b tx" style="left:438.2px;top:49.14px;" width="12.9" height="22.4"><text x="0" y="16" font-family="'Liberation Sans', sans-serif" font-size="16" font-weight="400" fill="#cca700" xml:space="preserve">2</text></svg>
<svg class="b" style="left:500.1px;top:51.7px;" width="15" height="15" viewBox="0 0 15 15"><circle cx="7.5" cy="7.5" r="7.5" fill="#cc3e44"/><path d="M8.6 4.1 V8.9 a1.9 1.9 0 0 1 -3.7 .5" fill="none" stroke="#2a2223" stroke-width="1.6"/></svg>
<svg class="b tx" style="left:523.5px;top:49.91px;" width="116.0" height="21.8"><text x="0" y="15.6" font-family="'Liberation Sans', sans-serif" font-size="15.6" font-weight="400" fill="#cca700" textLength="112.00" lengthAdjust="spacing" xml:space="preserve">CheckCode.java</text></svg>
<svg class="b tx" style="left:641.7px;top:49.14px;" width="12.9" height="22.4"><text x="0" y="16" font-family="'Liberation Sans', sans-serif" font-size="16" font-weight="400" fill="#cca700" xml:space="preserve">2</text></svg>
<svg class="b" style="left:661.3px;top:52.6px;" width="13" height="13" viewBox="0 0 13 13"><path d="M1 1 L12 12 M12 1 L1 12" stroke="#ffffff" stroke-width="1.5" fill="none"/></svg>
<svg class="b" style="left:1161px;top:51px;" width="16" height="18" viewBox="0 0 16 18"><path d="M2 1.5 V16.5 L14 9 Z" fill="none" stroke="#c5c5c5" stroke-width="1.5" stroke-linejoin="round"/></svg>
<svg class="b" style="left:1184.3px;top:55px;" width="11" height="8" viewBox="0 0 11 8"><path d="M1 1.5 L5.5 6 L10 1.5" fill="none" stroke="#c5c5c5" stroke-width="1.3"/></svg>
<svg class="b" style="left:1210.5px;top:49.4px;" width="18" height="18" viewBox="0 0 18 18"><g fill="none" stroke="#c5c5c5" stroke-width="1.5"><rect x="1.2" y="1.2" width="15" height="15.4" rx="1.5"/><path d="M8.7 1.2 V16.6"/></g></svg>
<svg class="b" style="left:1243px;top:57px;" width="18" height="4" viewBox="0 0 18 4"><circle cx="2" cy="2" r="1.35" fill="#c5c5c5"/><circle cx="8.6" cy="2" r="1.35" fill="#c5c5c5"/><circle cx="15.2" cy="2" r="1.35" fill="#c5c5c5"/></svg>
<svg class="b tx" style="left:293px;top:85.41px;" width="34.0" height="21.8"><text x="0" y="15.6" font-family="'Liberation Sans', sans-serif" font-size="15.6" font-weight="400" fill="#a9a9a9" textLength="30.00" lengthAdjust="spacing" xml:space="preserve">Java</text></svg>
<svg class="b" style="left:327.5px;top:89.1px;" width="13" height="13" viewBox="0 0 13 13"><path d="M4 1 L9.6 6.5 L4 12" fill="none" stroke="#a9a9a9" stroke-width="1.2"/></svg>
<svg class="b tx" style="left:343px;top:85.41px;" width="29.0" height="21.8"><text x="0" y="15.6" font-family="'Liberation Sans', sans-serif" font-size="15.6" font-weight="400" fill="#a9a9a9" textLength="25.00" lengthAdjust="spacing" xml:space="preserve">exp</text></svg>
<svg class="b" style="left:372.1px;top:89.1px;" width="13" height="13" viewBox="0 0 13 13"><path d="M4 1 L9.6 6.5 L4 12" fill="none" stroke="#a9a9a9" stroke-width="1.2"/></svg>
<svg class="b" style="left:392.8px;top:86.9px;" width="15" height="15" viewBox="0 0 15 15"><circle cx="7.5" cy="7.5" r="7.5" fill="#cc3e44"/><path d="M8.6 4.1 V8.9 a1.9 1.9 0 0 1 -3.7 .5" fill="none" stroke="#2a2223" stroke-width="1.6"/></svg>
<svg class="b tx" style="left:416px;top:85.41px;" width="116.0" height="21.8"><text x="0" y="15.6" font-family="'Liberation Sans', sans-serif" font-size="15.6" font-weight="400" fill="#a9a9a9" textLength="112.00" lengthAdjust="spacing" xml:space="preserve">CheckCode.java</text></svg>
<svg class="b" style="left:532.5px;top:89.1px;" width="13" height="13" viewBox="0 0 13 13"><path d="M4 1 L9.6 6.5 L4 12" fill="none" stroke="#a9a9a9" stroke-width="1.2"/></svg>
<svg class="b" style="left:548.5px;top:84.8px;" width="20" height="18" viewBox="0 0 20 18"><g fill="none" stroke="#ee9d28" stroke-width="1.4" stroke-linejoin="round"><path d="M5.2 1.5 L8.7 5 L5.2 8.5 L1.7 5 Z"/><path d="M8.7 5 H11.5 M10 5 V13 H13"/><rect x="11.5" y="3" width="6" height="4" rx=".8" transform="rotate(-8 14 5)"/><rect x="13" y="11" width="5.5" height="4" rx=".8"/></g></svg>
<svg class="b tx" style="left:572px;top:85.41px;" width="85.0" height="21.8"><text x="0" y="15.6" font-family="'Liberation Sans', sans-serif" font-size="15.6" font-weight="400" fill="#a9a9a9" textLength="81.00" lengthAdjust="spacing" xml:space="preserve">CheckCode</text></svg>
<svg class="b" style="left:657.2px;top:89.1px;" width="13" height="13" viewBox="0 0 13 13"><path d="M4 1 L9.6 6.5 L4 12" fill="none" stroke="#a9a9a9" stroke-width="1.2"/></svg>
<svg class="b" style="left:675px;top:84.6px;" width="18" height="19" viewBox="0 0 18 19"><g fill="none" stroke="#b180d7" stroke-width="1.4" stroke-linejoin="round"><path d="M9 1.5 L16.5 5 V13.5 L9 17.5 L1.5 13.5 V5 Z"/><path d="M1.5 5 L9 9 L16.5 5 M9 9 V17.5"/></g></svg>
<svg class="b tx" style="left:697px;top:85.41px;" width="357.0" height="21.8"><text x="0" y="15.6" font-family="'Liberation Sans', sans-serif" font-size="15.6" font-weight="400" fill="#a9a9a9" textLength="353.00" lengthAdjust="spacing" xml:space="preserve">service(HttpServletRequest, HttpServletResponse)</text></svg>
<div class="clip" style="left:273px;top:38px;width:921px;height:610px"><div style="left:108px;top:442.35px;width:899px;height:30.35px;border-top:1.6px solid #2c2c2c;border-bottom:1.6px solid #2c2c2c"></div><div style="left:107px;top:408.00px;width:1px;height:300px;background:#555"></div><div style="left:162px;top:475.50px;width:1px;height:300px;background:#8a8a8a"></div><div class="ln" style="top:74.20px;color:#858585">1</div><div class="cl" style="top:74.20px"><span style="color:#569cd6">import </span><span style="color:#4ec9b0">java</span><span style="color:#d4d4d4">.</span><span style="color:#4ec9b0">io</span><span style="color:#d4d4d4">.*;</span></div><div class="ln" style="top:107.95px;color:#858585">2</div><div class="cl" style="top:107.95px"><span style="color:#569cd6">import </span><span style="color:#4ec9b0;opacity:0.62">java</span><span style="color:#d4d4d4;opacity:0.62">.</span><span style="color:#4ec9b0;opacity:0.62">nio</span><span style="color:#d4d4d4;opacity:0.62">.</span><span style="color:#4ec9b0;opacity:0.62">Buffer</span><span style="color:#d4d4d4">;</span></div><div class="ln" style="top:141.70px;color:#858585">3</div><div class="ln" style="top:175.45px;color:#858585">4</div><div class="cl" style="top:175.45px"><span style="color:#569cd6">import </span><span style="color:#4ec9b0;opacity:0.62">javax</span><span style="color:#d4d4d4;opacity:0.62">.</span><span style="color:#4ec9b0;opacity:0.62">servlet</span><span style="color:#d4d4d4">.*;</span></div><div class="ln" style="top:209.20px;color:#858585">5</div><div class="cl" style="top:209.20px"><span style="color:#569cd6">import </span><span style="color:#4ec9b0">javax</span><span style="color:#d4d4d4">.</span><span style="color:#4ec9b0">servlet</span><span style="color:#d4d4d4">.</span><span style="color:#4ec9b0">http</span><span style="color:#d4d4d4">.*;</span></div><div class="ln" style="top:242.95px;color:#858585">6</div><div class="cl" style="top:242.95px"><span style="color:#569cd6">import </span><span style="color:#4ec9b0">java</span><span style="color:#d4d4d4">.</span><span style="color:#4ec9b0">awt</span><span style="color:#d4d4d4">.*;</span></div><div class="ln" style="top:276.70px;color:#858585">7</div><div class="cl" style="top:276.70px"><span style="color:#569cd6">import </span><span style="color:#4ec9b0">java</span><span style="color:#d4d4d4">.</span><span style="color:#4ec9b0">awt</span><span style="color:#d4d4d4">.</span><span style="color:#4ec9b0">image</span><span style="color:#d4d4d4">.*;</span></div><div class="ln" style="top:310.45px;color:#858585">8</div><div class="cl" style="top:310.45px"><span style="color:#569cd6">import </span><span style="color:#4ec9b0">javax</span><span style="color:#d4d4d4">.</span><span style="color:#4ec9b0">imageio</span><span style="color:#d4d4d4">.*;</span></div><div class="ln" style="top:344.20px;color:#858585">9</div><div class="cl" style="top:344.20px"><span style="color:#569cd6">import </span><span style="color:#4ec9b0">java</span><span style="color:#d4d4d4">.</span><span style="color:#4ec9b0">util</span><span style="color:#d4d4d4">.*;</span></div><div class="ln" style="top:377.95px;color:#858585">10</div><div class="cl" style="top:377.95px"><span style="color:#569cd6">public class </span><span style="color:#4ec9b0">CheckCode </span><span style="color:#569cd6">extends </span><span style="color:#4ec9b0">HttpServlet</span><span style="color:#ffd700">{</span></div><div class="ln" style="top:411.70px;color:#858585">11</div><div class="cl" style="top:411.70px"><span style="color:#d4d4d4">    </span><span style="color:#569cd6">public </span><span style="color:#4ec9b0">void </span><span style="color:#dcdcaa">service</span><span style="color:#da70d6">(</span><span style="color:#4ec9b0">HttpServletRequest </span><span style="color:#9cdcfe">request</span><span style="color:#d4d4d4">, </span><span style="color:#4ec9b0">HttpServletResponse </span></div><div class="ln" style="top:445.45px;color:#c6c6c6">12</div><div class="cl" style="top:445.45px"><span style="color:#d4d4d4">    </span><span style="color:#da70d6">{</span></div><div class="ln" style="top:479.20px;color:#858585">13</div><div class="cl" style="top:479.20px"><span style="color:#d4d4d4">        </span><span style="color:#6a9955">// response.setContentType(&quot;text/xml;charset=utf-8&quot;);</span></div><div class="ln" style="top:512.95px;color:#858585">14</div><div class="cl" style="top:512.95px"><span style="color:#d4d4d4">        </span><span style="color:#6a9955">// String xml = &quot;&quot;;</span></div><div class="ln" style="top:546.70px;color:#858585">15</div><div class="cl" style="top:546.70px"><span style="color:#d4d4d4">        </span><span style="color:#6a9955">// xml += &quot;&lt;users&gt;&quot;;</span></div><div class="ln" style="top:580.45px;color:#858585">16</div><div class="cl" style="top:580.45px"><span style="color:#d4d4d4">        </span><span style="color:#6a9955">// xml += &quot;&lt;user name=\&quot;a\&quot; pwd=\&quot;a\&quot; /&gt;&quot;;</span></div><div style="left:162.08px;top:444.75px;width:13.74px;height:26.75px;border:1px solid #888;box-sizing:border-box;background:rgba(0,100,0,.1)"></div><div style="left:175.83px;top:443.75px;width:2px;height:29.75px;background:#d8d8d8"></div></div>
<svg class="b" style="left:476px;top:173px;" width="208.5" height="4.5" viewBox="0 0 208.5 4.5"><path d="M0.00 0.7 L3.75 3.8 L7.50 0.7 L11.25 3.8 L15.00 0.7 L18.75 3.8 L22.50 0.7 L26.25 3.8 L30.00 0.7 L33.75 3.8 L37.50 0.7 L41.25 3.8 L45.00 0.7 L48.75 3.8 L52.50 0.7 L56.25 3.8 L60.00 0.7 L63.75 3.8 L67.50 0.7 L71.25 3.8 L75.00 0.7 L78.75 3.8 L82.50 0.7 L86.25 3.8 L90.00 0.7 L93.75 3.8 L97.50 0.7 L101.25 3.8 L105.00 0.7 L108.75 3.8 L112.50 0.7 L116.25 3.8 L120.00 0.7 L123.75 3.8 L127.50 0.7 L131.25 3.8 L135.00 0.7 L138.75 3.8 L142.50 0.7 L146.25 3.8 L150.00 0.7 L153.75 3.8 L157.50 0.7 L161.25 3.8 L165.00 0.7 L168.75 3.8 L172.50 0.7 L176.25 3.8 L180.00 0.7 L183.75 3.8 L187.50 0.7 L191.25 3.8 L195.00 0.7 L198.75 3.8 L202.50 0.7 L206.25 3.8" fill="none" stroke="#cca700" stroke-width="1.25"/></svg>
<div class="b" style="left:380.5px;top:633px;width:468.5px;height:15px;background:rgba(121,121,121,.4);"></div>
<div class="b" style="left:1194px;top:108.5px;width:6px;height:540px;background:linear-gradient(90deg,rgba(0,0,0,.35),rgba(0,0,0,0));"></div>
<svg class="b" style="left:1202px;top:109.5px;" width="60" height="80" viewBox="0 0 60 80"><rect x="0.0" y="0.0" width="7.5" height="1.2" fill="#569cd6" opacity=".55"/><rect x="8.5" y="0.0" width="7.5" height="1.2" fill="#4ec9b0" opacity=".55"/><rect x="0.0" y="2.0" width="10.5" height="1.2" fill="#569cd6" opacity=".55"/><rect x="11.5" y="2.0" width="10.5" height="1.2" fill="#4ec9b0" opacity=".55"/><rect x="0.0" y="6.0" width="10.5" height="1.2" fill="#569cd6" opacity=".55"/><rect x="11.5" y="6.0" width="10.5" height="1.2" fill="#4ec9b0" opacity=".55"/><rect x="0.0" y="8.0" width="13.0" height="1.2" fill="#569cd6" opacity=".55"/><rect x="14.0" y="8.0" width="13.0" height="1.2" fill="#4ec9b0" opacity=".55"/><rect x="0.0" y="10.0" width="8.0" height="1.2" fill="#569cd6" opacity=".55"/><rect x="9.0" y="10.0" width="8.0" height="1.2" fill="#4ec9b0" opacity=".55"/><rect x="0.0" y="12.0" width="11.0" height="1.2" fill="#569cd6" opacity=".55"/><rect x="12.0" y="12.0" width="11.0" height="1.2" fill="#4ec9b0" opacity=".55"/><rect x="0.0" y="14.0" width="10.5" height="1.2" fill="#569cd6" opacity=".55"/><rect x="11.5" y="14.0" width="10.5" height="1.2" fill="#4ec9b0" opacity=".55"/><rect x="0.0" y="16.0" width="8.5" height="1.2" fill="#569cd6" opacity=".55"/><rect x="9.5" y="16.0" width="8.5" height="1.2" fill="#4ec9b0" opacity=".55"/><rect x="0.0" y="18.0" width="9.8" height="1.2" fill="#569cd6" opacity=".55"/><rect x="10.8" y="18.0" width="9.8" height="1.2" fill="#4ec9b0" opacity=".55"/><rect x="21.5" y="18.0" width="9.8" height="1.2" fill="#569cd6" opacity=".55"/><rect x="32.2" y="18.0" width="9.8" height="1.2" fill="#4ec9b0" opacity=".55"/><rect x="4.0" y="20.0" width="10.2" height="1.2" fill="#569cd6" opacity=".55"/><rect x="15.2" y="20.0" width="10.2" height="1.2" fill="#dcdcaa" opacity=".55"/><rect x="26.4" y="20.0" width="10.2" height="1.2" fill="#4ec9b0" opacity=".55"/><rect x="37.6" y="20.0" width="10.2" height="1.2" fill="#9cdcfe" opacity=".55"/><rect x="48.8" y="20.0" width="10.2" height="1.2" fill="#4ec9b0" opacity=".55"/><rect x="4.0" y="22.0" width="1.0" height="1.2" fill="#d4d4d4" opacity=".55"/><rect x="8.0" y="24.0" width="51.0" height="1.2" fill="#6a9955" opacity=".55"/><rect x="8.0" y="26.0" width="18.0" height="1.2" fill="#6a9955" opacity=".55"/><rect x="8.0" y="28.0" width="19.0" height="1.2" fill="#6a9955" opacity=".55"/><rect x="8.0" y="30.0" width="41.0" height="1.2" fill="#6a9955" opacity=".55"/><rect x="8.0" y="32.0" width="41.0" height="1.2" fill="#6a9955" opacity=".55"/><rect x="8.0" y="34.0" width="41.0" height="1.2" fill="#6a9955" opacity=".55"/><rect x="8.0" y="36.0" width="18.0" height="1.2" fill="#6a9955" opacity=".55"/><rect x="8.0" y="38.0" width="1.0" height="1.2" fill="#6a9955" opacity=".55"/><rect x="8.0" y="40.0" width="35.0" height="1.2" fill="#6a9955" opacity=".55"/><rect x="8.0" y="42.0" width="6.0" height="1.2" fill="#4ec9b0" opacity=".55"/><rect x="15.0" y="42.0" width="6.0" height="1.2" fill="#9cdcfe" opacity=".55"/><rect x="8.0" y="44.0" width="12.0" height="1.2" fill="#4ec9b0" opacity=".55"/><rect x="21.0" y="44.0" width="12.0" height="1.2" fill="#9cdcfe" opacity=".55"/><rect x="34.0" y="44.0" width="12.0" height="1.2" fill="#569cd6" opacity=".55"/><rect x="47.0" y="44.0" width="12.0" height="1.2" fill="#4ec9b0" opacity=".55"/><rect x="8.0" y="46.0" width="11.0" height="1.2" fill="#569cd6" opacity=".55"/><rect x="20.0" y="46.0" width="11.0" height="1.2" fill="#d4d4d4" opacity=".55"/><rect x="8.0" y="48.0" width="1.0" height="1.2" fill="#d4d4d4" opacity=".55"/><rect x="12.0" y="50.0" width="8.3" height="1.2" fill="#569cd6" opacity=".55"/><rect x="21.3" y="50.0" width="8.3" height="1.2" fill="#4ec9b0" opacity=".55"/><rect x="30.7" y="50.0" width="8.3" height="1.2" fill="#9cdcfe" opacity=".55"/><rect x="12.0" y="52.0" width="4.0" height="1.2" fill="#9cdcfe" opacity=".55"/><rect x="17.0" y="52.0" width="4.0" height="1.2" fill="#d4d4d4" opacity=".55"/><rect x="8.0" y="54.0" width="1.0" height="1.2" fill="#d4d4d4" opacity=".55"/><rect x="8.0" y="56.0" width="12.0" height="1.2" fill="#4ec9b0" opacity=".55"/><rect x="21.0" y="56.0" width="12.0" height="1.2" fill="#9cdcfe" opacity=".55"/><rect x="34.0" y="56.0" width="12.0" height="1.2" fill="#569cd6" opacity=".55"/><rect x="47.0" y="56.0" width="12.0" height="1.2" fill="#4ec9b0" opacity=".55"/><rect x="8.0" y="58.0" width="13.0" height="1.2" fill="#4ec9b0" opacity=".55"/><rect x="22.0" y="58.0" width="13.0" height="1.2" fill="#9cdcfe" opacity=".55"/><rect x="36.0" y="58.0" width="13.0" height="1.2" fill="#d4d4d4" opacity=".55"/><rect x="8.0" y="60.0" width="12.0" height="1.2" fill="#9cdcfe" opacity=".55"/><rect x="21.0" y="60.0" width="12.0" height="1.2" fill="#dcdcaa" opacity=".55"/><rect x="8.0" y="62.0" width="14.7" height="1.2" fill="#9cdcfe" opacity=".55"/><rect x="23.7" y="62.0" width="14.7" height="1.2" fill="#dcdcaa" opacity=".55"/><rect x="39.3" y="62.0" width="14.7" height="1.2" fill="#d4d4d4" opacity=".55"/><rect x="8.0" y="64.0" width="6.3" height="1.2" fill="#9cdcfe" opacity=".55"/><rect x="15.3" y="64.0" width="6.3" height="1.2" fill="#dcdcaa" opacity=".55"/><rect x="22.7" y="64.0" width="6.3" height="1.2" fill="#4ec9b0" opacity=".55"/><rect x="8.0" y="66.0" width="9.7" height="1.2" fill="#9cdcfe" opacity=".55"/><rect x="18.7" y="66.0" width="9.7" height="1.2" fill="#dcdcaa" opacity=".55"/><rect x="29.3" y="66.0" width="9.7" height="1.2" fill="#d4d4d4" opacity=".55"/><rect x="8.0" y="68.0" width="6.0" height="1.2" fill="#9cdcfe" opacity=".55"/><rect x="15.0" y="68.0" width="6.0" height="1.2" fill="#dcdcaa" opacity=".55"/><rect x="8.0" y="70.0" width="12.0" height="1.2" fill="#4ec9b0" opacity=".55"/><rect x="21.0" y="70.0" width="12.0" height="1.2" fill="#dcdcaa" opacity=".55"/><rect x="34.0" y="70.0" width="12.0" height="1.2" fill="#9cdcfe" opacity=".55"/><rect x="47.0" y="70.0" width="12.0" height="1.2" fill="#6a9955" opacity=".55"/><rect x="4.0" y="72.0" width="1.0" height="1.2" fill="#d4d4d4" opacity=".55"/><rect x="0.0" y="74.0" width="1.0" height="1.2" fill="#d4d4d4" opacity=".55"/></svg>
<div class="b" style="left:1202px;top:131.3px;width:60px;height:2.2px;background:rgba(38,79,120,.75);"></div>
<div class="b" style="left:1202px;top:111.2px;width:60px;height:2px;background:rgba(204,167,0,.45);"></div>
<div class="b" style="left:1208px;top:111.2px;width:15px;height:2px;background:#cca700;"></div>
<div class="b" style="left:1202px;top:115.2px;width:60px;height:2px;background:rgba(204,167,0,.45);"></div>
<div class="b" style="left:1208px;top:115.2px;width:13px;height:2px;background:#cca700;"></div>
<div class="b" style="left:1263px;top:109px;width:17px;height:159px;background:#424242;"></div>
<div class="b" style="left:1275px;top:118px;width:5px;height:10px;background:#b89a1c;"></div>
<div class="b" style="left:1275px;top:137.5px;width:5px;height:10.5px;background:#b89a1c;"></div>
<div class="b" style="left:1263px;top:217px;width:17px;height:2px;background:#7a7a7a;"></div>
<div class="b" style="left:1269px;top:219px;width:7px;height:9px;background:#7a7a7a;"></div>
<div class="b" style="left:1263px;top:108.5px;width:1px;height:540px;background:#303030;"></div>
<div class="b" style="left:1269px;top:467.6px;width:7px;height:10.2px;background:#a0a0a0;"></div>
<div class="b" style="left:273px;top:648px;width:1007px;height:312px;background:#1e1e1e;"></div>
<div class="b" style="left:273px;top:648px;width:1007px;height:1px;background:#434343;"></div>
<div class="t" style="left:298px;top:661.00px;height:19px;line-height:19px;font-family:'Liberation Sans','Noto Sans CJK SC', sans-serif;font-size:13.8px;font-weight:400;color:#969696;">问题</div>
<svg class="b" style="left:337.5px;top:657.5px;" width="27" height="27" viewBox="0 0 27 27"><circle cx="13.5" cy="13.5" r="13.2" fill="#4d4d4d"/></svg>
<svg class="b tx" style="left:343px;top:661.35px;" width="20.0" height="19.6"><text x="0" y="14" font-family="'Liberation Sans', sans-serif" font-size="14" font-weight="400" fill="#ffffff" textLength="16.00" lengthAdjust="spacing" xml:space="preserve">20</text></svg>
<div class="t" style="left:392px;top:661.00px;height:19px;line-height:19px;font-family:'Liberation Sans','Noto Sans CJK SC', sans-serif;font-size:13.8px;font-weight:400;color:#969696;">输出</div>
<div class="t" style="left:450px;top:661.00px;height:19px;line-height:19px;font-family:'Liberation Sans','Noto Sans CJK SC', sans-serif;font-size:13.8px;font-weight:400;color:#969696;">调试控制台</div>
<div class="t" style="left:548px;top:661.00px;height:19px;line-height:19px;font-family:'Liberation Sans','Noto Sans CJK SC', sans-serif;font-size:13.8px;font-weight:400;color:#e7e7e7;letter-spacing:0.4px;">终端</div>
<div class="b" style="left:546px;top:683.5px;width:33px;height:1.3px;background:#e7e7e7;"></div>
<svg class="b" style="left:1037px;top:662px;" width="18" height="18" viewBox="0 0 18 18"><g fill="none" stroke="#c5c5c5" stroke-width="1.4"><rect x=".9" y=".9" width="16.2" height="16.2" rx="1.5"/><path d="M6 5 L10.2 9 L6 13"/></g></svg>
<svg class="b tx" style="left:1061px;top:660.54px;" width="35.0" height="21.6"><text x="0" y="15.4" font-family="'Liberation Sans', sans-serif" font-size="15.4" font-weight="400" fill="#cccccc" textLength="31.00" lengthAdjust="spacing" xml:space="preserve">Code</text></svg>
<svg class="b" style="left:1106px;top:662px;" width="18" height="18" viewBox="0 0 18 18"><path d="M9 .5 V17.5 M.5 9 H17.5" stroke="#c5c5c5" stroke-width="1.5"/></svg>
<svg class="b" style="left:1129.5px;top:666.5px;" width="12" height="8" viewBox="0 0 12 8"><path d="M1 1.5 L6 6.5 L11 1.5" fill="none" stroke="#c5c5c5" stroke-width="1.3"/></svg>
<svg class="b" style="left:1156px;top:662px;" width="18" height="18" viewBox="0 0 18 18"><g fill="none" stroke="#c5c5c5" stroke-width="1.4"><rect x=".9" y=".9" width="16.2" height="16.2" rx="1.5"/><path d="M9 .9 V17.1"/></g></svg>
<svg class="b" style="left:1188px;top:661px;" width="15" height="19" viewBox="0 0 15 19"><g fill="none" stroke="#c5c5c5" stroke-width="1.4"><path d="M.5 4.5 H14.5 M5 4 V1.5 H10 V4 M2.2 4.5 L2.8 17.5 H12.2 L12.8 4.5 M5.5 7 V15 M7.5 7 V15 M9.5 7 V15"/></g></svg>
<svg class="b" style="left:1221px;top:665px;" width="16" height="10" viewBox="0 0 16 10"><path d="M1 8.5 L8 1.5 L15 8.5" fill="none" stroke="#c5c5c5" stroke-width="1.5"/></svg>
<svg class="b" style="left:1249.5px;top:663.5px;" width="14" height="14" viewBox="0 0 14 14"><path d="M1 1 L13 13 M13 1 L1 13" stroke="#c5c5c5" stroke-width="1.5" fill="none"/></svg>
<div class="t ts" style="left:298.00px;top:698.40px;height:20px;line-height:20px">符号：</div><div class="t tm" style="left:352.00px;top:699.40px;color:#cccccc"> </div><div class="t ts" style="left:361.00px;top:698.40px;height:20px;line-height:20px">类</div><div class="t tm" style="left:379.00px;top:699.40px;color:#cccccc"> HttpServletResponse</div>
<div class="t ts" style="left:298.00px;top:718.40px;height:20px;line-height:20px">位置：</div><div class="t tm" style="left:352.00px;top:719.40px;color:#cccccc"> </div><div class="t ts" style="left:361.00px;top:718.40px;height:20px;line-height:20px">类</div><div class="t tm" style="left:379.00px;top:719.40px;color:#cccccc"> CheckCode</div>
<div class="t tm" style="left:298.00px;top:739.40px;color:#cccccc">    public void service(HttpServletRequest request, HttpServletResponse response) throws IOException</div>
<div class="t tm" style="left:298.00px;top:759.40px;color:#cccccc">                                                    ^</div>
<div class="t tm" style="left:298.00px;top:779.40px;color:#cccccc">5 </div><div class="t ts" style="left:316.00px;top:778.40px;height:20px;line-height:20px">错误</div>
<div class="t tm" style="left:298.00px;top:799.40px;color:#cccccc">PS D:\MyProjects\Java\exp&gt; </div><div class="t tm" style="left:541.00px;top:799.40px;color:#f0e442">cd </div><div class="t tm" style="left:568.00px;top:799.40px;color:#29a4d8">&quot;d:\MyProjects\Java\exp\&quot;</div><div class="t tm" style="left:793.00px;top:799.40px;color:#cccccc"> ; </div><div class="t tm" style="left:820.00px;top:799.40px;color:#23b574">if</div><div class="t tm" style="left:838.00px;top:799.40px;color:#cccccc"> (</div><div class="t tm" style="left:856.00px;top:799.40px;color:#23b574">$?</div><div class="t tm" style="left:874.00px;top:799.40px;color:#cccccc">) { </div><div class="t tm" style="left:910.00px;top:799.40px;color:#f0e442">javac</div><div class="t tm" style="left:955.00px;top:799.40px;color:#cccccc"> CheckCode.java } ; </div><div class="t tm" style="left:1135.00px;top:799.40px;color:#23b574">if</div><div class="t tm" style="left:1153.00px;top:799.40px;color:#cccccc"> (</div><div class="t tm" style="left:1171.00px;top:799.40px;color:#23b574">$?</div><div class="t tm" style="left:1189.00px;top:799.40px;color:#cccccc">) { </div><div class="t tm" style="left:1225.00px;top:799.40px;color:#f0e442">jav</div>
<div class="t tm" style="left:298.00px;top:819.40px;color:#f0e442">a</div><div class="t tm" style="left:307.00px;top:819.40px;color:#cccccc"> CheckCode }</div>
<div class="t tm" style="left:298.00px;top:839.40px;color:#cccccc">CheckCode.java:4: </div><div class="t ts" style="left:460.00px;top:838.40px;height:20px;line-height:20px">软件包</div><div class="t tm" style="left:514.00px;top:839.40px;color:#cccccc"> javax.servlet </div><div class="t ts" style="left:649.00px;top:838.40px;height:20px;line-height:20px">不存在</div>
<div class="t tm" style="left:298.00px;top:859.40px;color:#cccccc">import javax.servlet.*;</div>
<div class="t tm" style="left:298.00px;top:879.40px;color:#cccccc">^</div>
<div class="t tm" style="left:298.00px;top:899.40px;color:#cccccc">CheckCode.java:5: </div><div class="t ts" style="left:460.00px;top:898.40px;height:20px;line-height:20px">软件包</div><div class="t tm" style="left:514.00px;top:899.40px;color:#cccccc"> javax.servlet.http </div><div class="t ts" style="left:694.00px;top:898.40px;height:20px;line-height:20px">不存在</div>
<div class="t tm" style="left:298.00px;top:919.40px;color:#cccccc">import javax.servlet.http.*;</div>
<div class="t tm" style="left:298.00px;top:939.40px;color:#cccccc">^</div>
<div class="b" style="left:0px;top:960px;width:1280px;height:26px;background:#007acc;"></div>
<div class="b" style="left:0px;top:960px;width:43px;height:26px;background:#16825d;"></div>
<svg class="b" style="left:14px;top:964px;" width="17" height="18" viewBox="0 0 17 18"><path d="M2 5 L7 10 L2 15 M15 2.5 L10 7.5 L15 12.5" fill="none" stroke="#ffffff" stroke-width="1.6"/></svg>
<svg class="b" style="left:52.4px;top:963.8px;" width="18" height="18" viewBox="0 0 18 18"><g fill="none" stroke="#ffffff" stroke-width="1.4"><circle cx="9" cy="9" r="7.6"/><path d="M5.8 5.8 L12.2 12.2 M12.2 5.8 L5.8 12.2"/></g></svg>
<svg class="b tx" style="left:75px;top:963.30px;" width="12.3" height="21.0"><text x="0" y="15" font-family="'Liberation Sans', sans-serif" font-size="15" font-weight="400" fill="#ffffff" xml:space="preserve">0</text></svg>
<svg class="b" style="left:87px;top:964.5px;" width="17" height="17" viewBox="0 0 17 17"><g fill="none" stroke="#ffffff" stroke-width="1.4" stroke-linejoin="round"><path d="M8.3 1.5 L15.8 15.5 H.8 Z"/><path d="M8.3 6 V10.8 M8.3 12.4 V13.8"/></g></svg>
<svg class="b tx" style="left:108px;top:963.30px;" width="19.5" height="21.0"><text x="0" y="15" font-family="'Liberation Sans', sans-serif" font-size="15" font-weight="400" fill="#ffffff" textLength="15.50" lengthAdjust="spacing" xml:space="preserve">20</text></svg>
<svg class="b" style="left:145px;top:966px;" width="14" height="14" viewBox="0 0 14 14"><path d="M1.5 6 L7 11.5 L12.5 2" fill="none" stroke="#ffffff" stroke-width="1.4"/></svg>
<svg class="b tx" style="left:168.5px;top:963.30px;" width="26.0" height="21.0"><text x="0" y="15" font-family="'Liberation Sans', sans-serif" font-size="15" font-weight="400" fill="#ffffff" textLength="22.00" lengthAdjust="spacing" xml:space="preserve">180</text></svg>
<div class="t" style="left:750.5px;top:962.60px;height:21px;line-height:21px;font-family:'Liberation Sans','Noto Sans CJK SC', sans-serif;font-size:15px;font-weight:400;color:#ffffff;">行</div>
<div class="t" style="left:770px;top:962.60px;height:21px;line-height:21px;font-family:'Liberation Sans','Noto Sans CJK SC', sans-serif;font-size:15px;font-weight:400;color:#ffffff;">12，</div>
<div class="t" style="left:798.5px;top:962.60px;height:21px;line-height:21px;font-family:'Liberation Sans','Noto Sans CJK SC', sans-serif;font-size:15px;font-weight:400;color:#ffffff;">列</div>
<svg class="b tx" style="left:819px;top:963.30px;" width="12.3" height="21.0"><text x="0" y="15" font-family="'Liberation Sans', sans-serif" font-size="15" font-weight="400" fill="#ffffff" xml:space="preserve">6</text></svg>
<div class="t" style="left:848px;top:962.60px;height:21px;line-height:21px;font-family:'Liberation Sans','Noto Sans CJK SC', sans-serif;font-size:15px;font-weight:400;color:#ffffff;letter-spacing:-0.5px;">空格</div>
<svg class="b tx" style="left:877.5px;top:963.30px;" width="19.5" height="21.0"><text x="0" y="15" font-family="'Liberation Sans', sans-serif" font-size="15" font-weight="400" fill="#ffffff" textLength="15.50" lengthAdjust="spacing" xml:space="preserve">: 4</text></svg>
<svg class="b tx" style="left:914px;top:963.30px;" width="63.0" height="21.0"><text x="0" y="15" font-family="'Liberation Sans', sans-serif" font-size="15" font-weight="400" fill="#ffffff" textLength="59.00" lengthAdjust="spacing" xml:space="preserve">GB18030</text></svg>
<svg class="b tx" style="left:993px;top:963.30px;" width="36.0" height="21.0"><text x="0" y="15" font-family="'Liberation Sans', sans-serif" font-size="15" font-weight="400" fill="#ffffff" textLength="32.00" lengthAdjust="spacing" xml:space="preserve">CRLF</text></svg>
<svg class="b tx" style="left:1044.5px;top:962.47px;" width="18.5" height="21.7"><text x="0" y="15.5" font-family="'Liberation Sans', sans-serif" font-size="15.5" font-weight="400" fill="#ffffff" textLength="14.50" lengthAdjust="spacing" xml:space="preserve">{}</text></svg>
<svg class="b tx" style="left:1068px;top:963.30px;" width="32.0" height="21.0"><text x="0" y="15" font-family="'Liberation Sans', sans-serif" font-size="15" font-weight="400" fill="#ffffff" textLength="28.00" lengthAdjust="spacing" xml:space="preserve">Java</text></svg>
<svg class="b" style="left:1117px;top:964.5px;" width="15" height="17" viewBox="0 0 15 17"><g fill="none" stroke="#ffffff" stroke-width="1.7"><circle cx="7.5" cy="7" r="2"/><path d="M3.8 11 a5.3 5.3 0 1 1 7.4 0 M7.5 9 V16.5"/><path d="M5 16.5 L7.5 10 L10 16.5" stroke-width="1.2"/></g></svg>
<svg class="b tx" style="left:1137px;top:963.30px;" width="53.0" height="21.0"><text x="0" y="15" font-family="'Liberation Sans', sans-serif" font-size="15" font-weight="400" fill="#ffffff" textLength="49.00" lengthAdjust="spacing" xml:space="preserve">Go Live</text></svg>
<svg class="b" style="left:1207px;top:964.5px;" width="18" height="17" viewBox="0 0 18 17"><g fill="none" stroke="#ffffff" stroke-width="1.4"><circle cx="5.7" cy="8" r="2.8"/><path d="M.8 16.5 a4.9 4.9 0 0 1 9.8 0"/><path d="M5 1 H16.5 V8.5 H12.5 L10.5 10.5 V8.5"/></g></svg>
<svg class="b" style="left:1245px;top:964px;" width="16" height="18" viewBox="0 0 16 18"><g fill="none" stroke="#ffffff" stroke-width="1.4" stroke-linejoin="round"><path d="M2.8 13.5 V8 a5.2 5.2 0 0 1 10.4 0 V13.5 L14.5 15 H1.5 Z"/><path d="M6.5 15.5 a1.6 1.6 0 0 0 3 0"/></g></svg>
<div class="b" style="left:356px;top:192px;width:448px;height:103px;box-sizing:border-box;border:5px solid #e81c24;z-index:3"></div>
<svg class="b" style="left:476px;top:240.5px;" width="181" height="2.6" viewBox="0 0 181 2.6"><path d="M0.00 0.7 L3.75 3.8 L7.50 0.7 L11.25 3.8 L15.00 0.7 L18.75 3.8 L22.50 0.7 L26.25 3.8 L30.00 0.7 L33.75 3.8 L37.50 0.7 L41.25 3.8 L45.00 0.7 L48.75 3.8 L52.50 0.7 L56.25 3.8 L60.00 0.7 L63.75 3.8 L67.50 0.7 L71.25 3.8 L75.00 0.7 L78.75 3.8 L82.50 0.7 L86.25 3.8 L90.00 0.7 L93.75 3.8 L97.50 0.7 L101.25 3.8 L105.00 0.7 L108.75 3.8 L112.50 0.7 L116.25 3.8 L120.00 0.7 L123.75 3.8 L127.50 0.7 L131.25 3.8 L135.00 0.7 L138.75 3.8 L142.50 0.7 L146.25 3.8 L150.00 0.7 L153.75 3.8 L157.50 0.7 L161.25 3.8 L165.00 0.7 L168.75 3.8 L172.50 0.7 L176.25 3.8 L180.00 0.7" fill="none" stroke="#cca700" stroke-width="1.25"/></svg>
<div class="b" style="left:71px;top:800px;width:192px;height:173.5px;box-sizing:border-box;border:5px solid #e81c24;z-index:6"></div>
<div class="b" style="left:76px;top:960px;width:182px;height:8.5px;background:#007acc;z-index:5"></div>
<svg class="b" style="left:700px;top:820px;z-index:6" width="380" height="125" viewBox="700 820 380 125"><path d="M712.5 859.5 C712.0 856.5 716.8 849.9 719.0 846.0 C721.2 842.1 724.4 835.8 727.5 833.5 C730.6 831.2 732.9 831.0 740.0 831.0 C747.1 831.0 758.5 832.6 775.0 833.3 C791.5 834.0 827.5 835.1 850.0 835.8 C872.5 836.5 908.1 837.1 925.0 838.0 C941.9 838.9 954.1 840.4 962.5 842.0 C970.9 843.6 977.6 846.6 981.0 849.0 C984.4 851.4 984.4 854.0 985.0 858.0 C985.6 862.0 990.2 872.5 985.0 875.5 C979.8 878.5 962.8 878.4 950.0 878.0 C937.2 877.6 915.0 874.4 900.0 873.0 C885.0 871.6 865.0 869.2 850.0 868.5 C835.0 867.8 815.0 867.9 800.0 868.0 C785.0 868.1 760.4 869.1 750.0 869.5 C739.6 869.9 735.2 871.0 731.0 870.5 C726.8 870.0 724.8 867.6 722.0 866.0 C719.2 864.4 713.0 862.5 712.5 859.5Z" fill="#030303"/><path d="M752.7 911.7 C752.1 908.9 753.6 904.5 755.0 902.0 C756.4 899.5 758.0 896.9 762.0 895.0 C766.0 893.1 768.4 890.6 782.0 889.3 C795.6 888.0 829.2 886.7 852.5 886.4 C875.8 886.1 918.0 886.4 937.0 887.0 C956.0 887.6 968.5 889.8 979.0 890.7 C989.5 891.6 997.9 892.9 1007.0 893.3 C1016.1 893.7 1031.8 893.5 1040.0 893.5 C1048.2 893.5 1058.7 889.3 1062.0 893.5 C1065.3 897.7 1066.1 917.3 1062.0 921.6 C1057.9 925.9 1038.7 921.4 1034.5 922.4 C1030.3 923.4 1044.4 927.1 1034.0 928.0 C1023.6 928.9 988.0 928.7 965.0 928.6 C942.0 928.5 901.7 927.2 880.6 927.2 C859.5 927.2 838.7 928.0 824.4 928.6 C810.1 929.2 792.4 930.4 785.0 931.4 C777.6 932.4 778.0 936.0 775.0 935.6 C772.0 935.2 767.7 930.8 765.3 928.6 C762.9 926.4 760.9 923.5 759.0 921.0 C757.1 918.5 753.3 914.6 752.7 911.7Z" fill="#030303"/></svg>
<svg class="b tx" style="left:724px;top:833.71px;z-index:7;" width="287.0" height="26.6"><text x="0" y="19" font-family="'Liberation Serif', serif" font-size="19" font-weight="400" fill="#e81c24" stroke="#e81c24" stroke-width="0.45" textLength="283.00" lengthAdjust="spacing" xml:space="preserve">package javax.servlet does not exist</text></svg>
<svg class="b tx" style="left:777px;top:894.91px;z-index:7;" width="324.0" height="26.6"><text x="0" y="19" font-family="'Liberation Serif', serif" font-size="19" font-weight="400" fill="#e81c24" stroke="#e81c24" stroke-width="0.45" textLength="320.00" lengthAdjust="spacing" xml:space="preserve">package javax.servlet.http does not exist</text></svg>
</div>
</body></html>
